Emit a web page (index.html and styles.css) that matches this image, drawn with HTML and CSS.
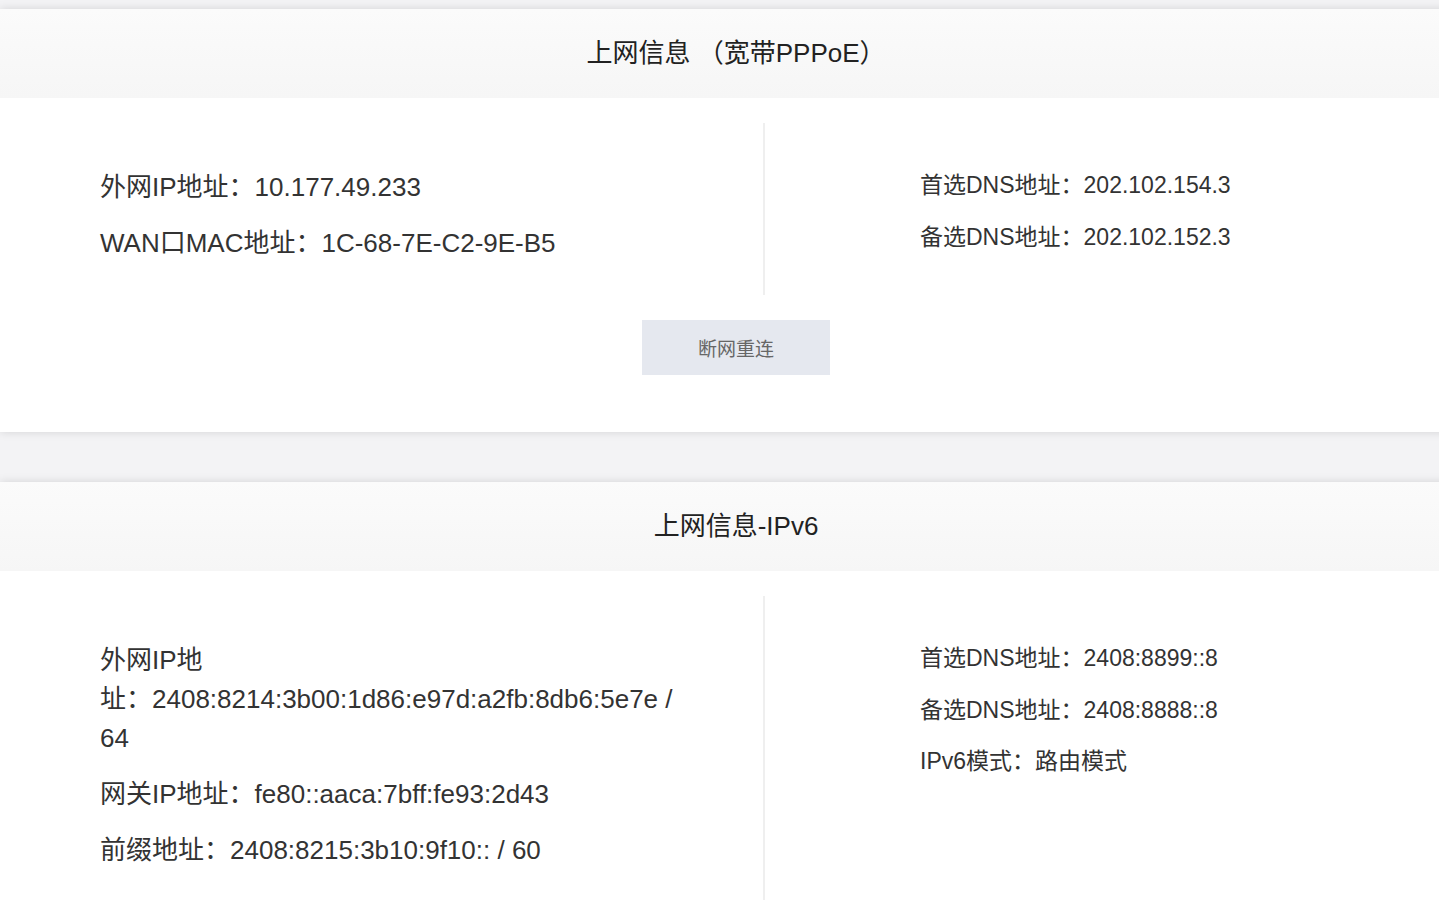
FILE: index.html
```html
<!DOCTYPE html>
<html lang="zh-CN">
<head>
<meta charset="utf-8">
<title>上网信息</title>
<link rel="stylesheet" href="styles.css">
</head>
<body>
<div class="page">
  <section class="panel">
    <header class="panel-head">上网信息 （宽带PPPoE）</header>
    <div class="panel-body">
      <div class="cols">
        <div class="col col-left">
          <p class="item">外网IP地址：10.177.49.233</p>
          <p class="item">WAN口MAC地址：1C-68-7E-C2-9E-B5</p>
        </div>
        <div class="col col-right">
          <p class="item">首选DNS地址：202.102.154.3</p>
          <p class="item">备选DNS地址：202.102.152.3</p>
        </div>
      </div>
      <div class="actions">
        <button class="btn" type="button">断网重连</button>
      </div>
    </div>
  </section>

  <section class="panel">
    <header class="panel-head">上网信息-IPv6</header>
    <div class="panel-body">
      <div class="cols">
        <div class="col col-left">
          <p class="item">外网IP地<span class="nw">址：2408:8214:3b00:1d86:e97d:a2fb:8db6:5e7e</span> / 64</p>
          <p class="item">网关IP地址：fe80::aaca:7bff:fe93:2d43</p>
          <p class="item">前缀地址：2408:8215:3b10:9f10:: / 60</p>
        </div>
        <div class="col col-right">
          <p class="item">首选DNS地址：2408:8899::8</p>
          <p class="item">备选DNS地址：2408:8888::8</p>
          <p class="item">IPv6模式：路由模式</p>
        </div>
      </div>
    </div>
  </section>
</div>
</body>
</html>
```

FILE: styles.css
```css
html, body {
  margin: 0;
  padding: 0;
}
body {
  background: #f3f3f5;
  font-family: "Liberation Sans", "Noto Sans CJK SC", sans-serif;
  color: #333;
  overflow: hidden;
  width: 1439px;
  height: 900px;
}
.page {
  width: 1472px;
  padding-top: 9px;
  display: flex;
  flex-direction: column;
  gap: 50px;
}
.panel {
  background: #fff;
  box-shadow: 0 0 9px rgba(0, 0, 0, 0.13);
}
.panel-head {
  height: 89px;
  line-height: 89px;
  text-align: center;
  font-size: 26px;
  color: #222;
  background: linear-gradient(#fbfbfb, #f6f6f6);
}
.panel-body {
  padding-top: 25px;
}
.cols {
  display: grid;
  grid-template-columns: 765px 1fr;
}
.col {
  padding-top: 45px;
  padding-bottom: 15px;
}
.col-left {
  padding-left: 100px;
  padding-right: 75px;
  border-right: 2px solid #efefef;
  font-size: 26px;
  line-height: 39px;
}
.col-right {
  padding-left: 155px;
  font-size: 23px;
  line-height: 34.5px;
}
.item {
  margin: 0 0 17px;
}
.nw {
  white-space: nowrap;
}
.actions {
  display: flex;
  justify-content: center;
  padding: 25px 0 57px;
}
.btn {
  width: 188px;
  height: 55px;
  border: none;
  background: #e5e8ef;
  color: #666;
  font-family: "Liberation Sans", "Noto Sans CJK SC", sans-serif;
  font-size: 19px;
  padding: 0;
}
```
